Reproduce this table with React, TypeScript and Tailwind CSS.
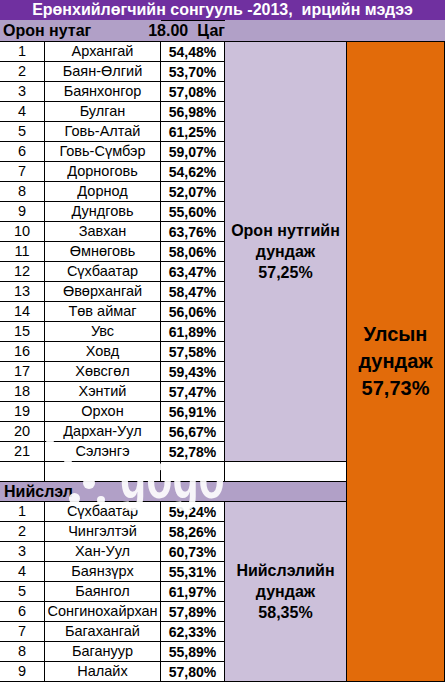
const rural: [string, string][] = [
  ["Архангай", "54,48%"],
  ["Баян-Өлгий", "53,70%"],
  ["Баянхонгор", "57,08%"],
  ["Булган", "56,98%"],
  ["Говь-Алтай", "61,25%"],
  ["Говь-Сүмбэр", "59,07%"],
  ["Дорноговь", "54,62%"],
  ["Дорнод", "52,07%"],
  ["Дундговь", "55,60%"],
  ["Завхан", "63,76%"],
  ["Өмнөговь", "58,06%"],
  ["Сүхбаатар", "63,47%"],
  ["Өвөрхангай", "58,47%"],
  ["Төв аймаг", "56,06%"],
  ["Увс", "61,89%"],
  ["Ховд", "57,58%"],
  ["Хөвсгөл", "59,43%"],
  ["Хэнтий", "57,47%"],
  ["Орхон", "56,91%"],
  ["Дархан-Уул", "56,67%"],
  ["Сэлэнгэ", "52,78%"],
];

const capital: [string, string][] = [
  ["Сүхбаатар", "59,24%"],
  ["Чингэлтэй", "58,26%"],
  ["Хан-Уул", "60,73%"],
  ["Баянзүрх", "55,31%"],
  ["Баянгол", "61,97%"],
  ["Сонгинохайрхан", "57,89%"],
  ["Багахангай", "62,33%"],
  ["Багануур", "55,89%"],
  ["Налайх", "57,80%"],
];

function Row({ n, name, pct }: { n: number | string; name: string; pct: string }) {
  return (
    <div className="flex h-[20px] border-b border-black bg-white text-[14.5px] leading-none">
      <div className="flex w-[45px] items-center justify-center border-r border-black">{n}</div>
      <div className="flex w-[116px] items-center justify-center whitespace-nowrap border-r border-black">{name}</div>
      <div className="flex w-[64px] items-center justify-center border-r border-black text-[14px] font-bold">{pct}</div>
    </div>
  );
}

// rows on the left, the merged average cell on the right
function Section({
  rows,
  label,
  value,
}: {
  rows: [string, string][];
  label: string[];
  value: string;
}) {
  return (
    <div className="flex">
      <div className="flex flex-col">
        {rows.map(([name, pct], i) => (
          <Row key={name + i} n={i + 1} name={name} pct={pct} />
        ))}
      </div>
      <div className="flex w-[122px] flex-col items-center justify-center border-r border-b border-black bg-[#ccc0da] text-[16px] font-bold leading-[21px]">
        {label.map((l) => (
          <span key={l}>{l}</span>
        ))}
        <span>{value}</span>
      </div>
    </div>
  );
}

export default function App() {
  return (
    <div className="relative h-[684px] w-[445px] overflow-hidden bg-white font-['Liberation_Sans',Arial,sans-serif] text-black">
      <div className="flex h-[20px] items-center justify-center whitespace-pre bg-[#7030a0] text-[16px] font-bold text-white">
        Ерөнхийлөгчийн сонгууль -2013,  ирцийн мэдээ
      </div>
      <div className="flex h-[22px] border-b border-black bg-[#b1a0c7] text-[16px] font-bold">
        <div className="flex w-[161px] items-center pl-[3px]">Орон нутаг</div>
        <div className="flex w-[64px] items-center justify-end whitespace-pre border-t border-black">18.00  Цаг</div>
      </div>
      <div className="flex">
        <div className="flex w-[347px] flex-col">
          <Section rows={rural} label={["Орон нутгийн", "дундаж"]} value="57,25%" />
          <div className="flex">
            <Row n="" name="" pct="" />
            <div className="h-[20px] w-[122px] border-r border-b border-black bg-white" />
          </div>
          <div className="flex h-[20px] items-center border-r border-b border-black bg-[#b1a0c7] pl-[4px] text-[16px] font-bold">
            Нийслэл
          </div>
          <Section rows={capital} label={["Нийслэлийн", "дундаж"]} value="58,35%" />
        </div>
        <div className="flex h-[640px] w-[98px] flex-col items-center justify-center border-r border-b border-black bg-[#e26b0a] text-[20px] font-bold leading-[27px]">
          <span>Улсын</span>
          <span>дундаж</span>
          <span>57,73%</span>
        </div>
      </div>

      {/* watermark */}
      <div className="pointer-events-none absolute left-[120px] top-[444px] origin-left scale-x-[0.67] text-[64px] font-bold leading-none text-white opacity-90">
        gogo
      </div>
      <div className="pointer-events-none absolute left-[46px] top-[439px] h-[8px] w-[8px] rounded-full bg-white opacity-90" />
      <div className="pointer-events-none absolute left-[64px] top-[456px] h-[8px] w-[8px] rounded-full bg-white opacity-90" />
      <div className="pointer-events-none absolute left-[83px] top-[477px] h-[12px] w-[12px] rounded-full bg-white opacity-90" />
      <div className="pointer-events-none absolute left-[69px] top-[493px] h-[11px] w-[11px] rounded-full bg-white opacity-90" />
      <div className="pointer-events-none absolute left-[97px] top-[496px] h-[8px] w-[8px] rounded-full bg-white opacity-90" />
    </div>
  );
}
